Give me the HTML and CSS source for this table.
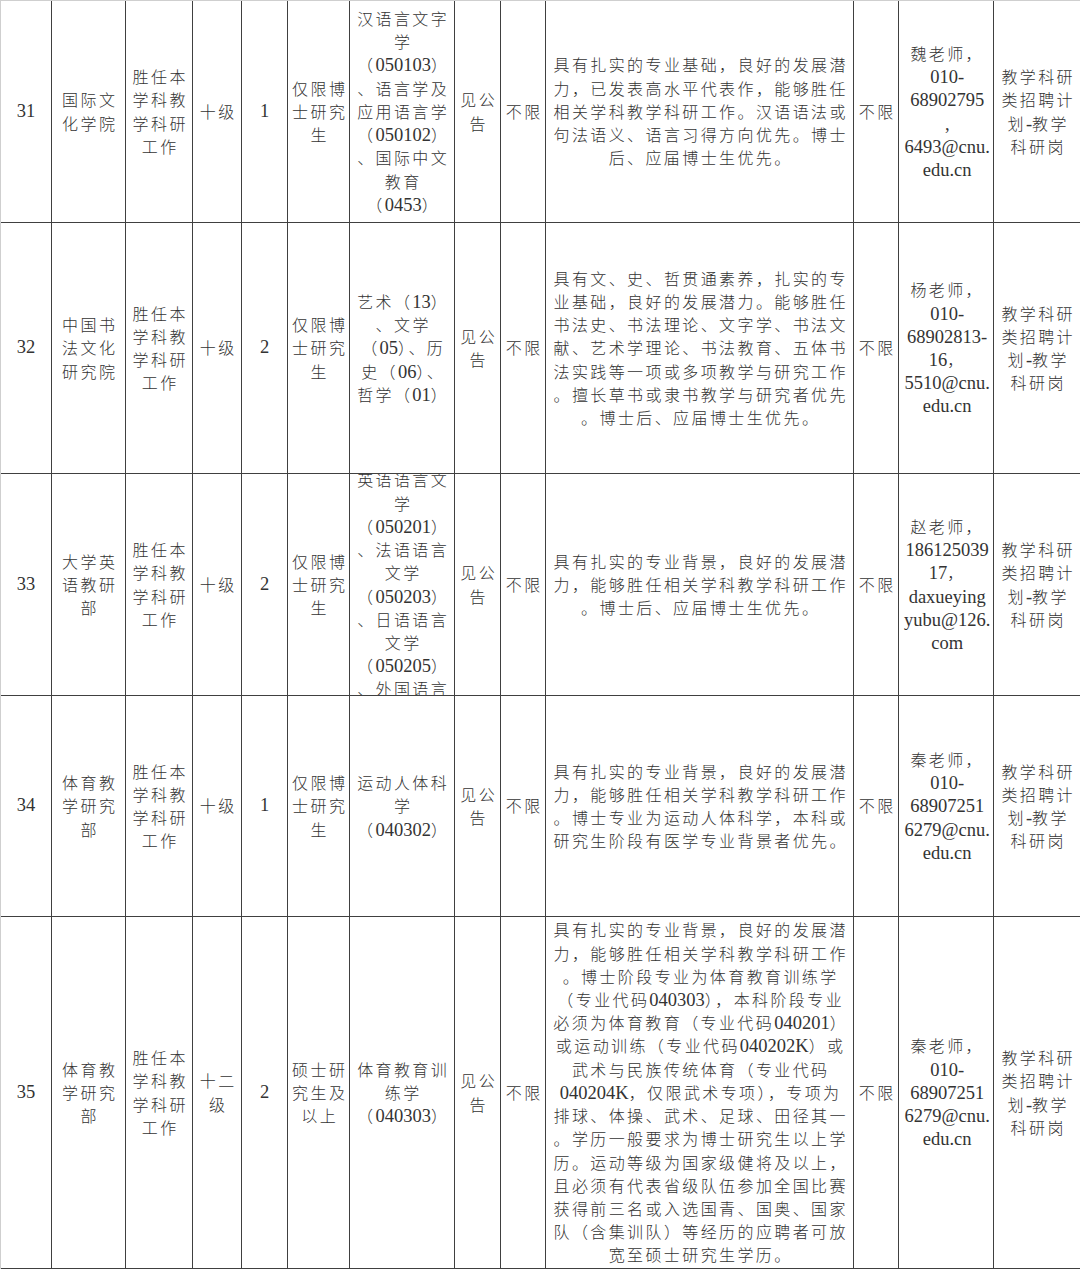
FILE: index.html
```html
<!DOCTYPE html>
<html lang="zh-CN">
<head>
<meta charset="utf-8">
<title>教学科研类招聘计划</title>
<link rel="stylesheet" href="styles.css">
</head>
<body>
<div class="grid">
  <!-- Row 31 -->
  <div class="cell"><div class="t en">31</div></div>
  <div class="cell"><div class="t">国际文<br>化学院</div></div>
  <div class="cell"><div class="t">胜任本<br>学科教<br>学科研<br>工作</div></div>
  <div class="cell"><div class="t">十级</div></div>
  <div class="cell"><div class="t en">1</div></div>
  <div class="cell"><div class="t">仅限博<br>士研究<br>生</div></div>
  <div class="cell"><div class="t">汉语言文字<br>学<br>（<span class="en">050103</span>）<br>、语言学及<br>应用语言学<br>（<span class="en">050102</span>）<br>、国际中文<br>教育<br>（<span class="en">0453</span>）</div></div>
  <div class="cell"><div class="t">见公<br>告</div></div>
  <div class="cell"><div class="t">不限</div></div>
  <div class="cell"><div class="t">具有扎实的专业基础，良好的发展潜<br>力，已发表高水平代表作，能够胜任<br>相关学科教学科研工作。汉语语法或<br>句法语义、语言习得方向优先。博士<br>后、应届博士生优先。</div></div>
  <div class="cell"><div class="t">不限</div></div>
  <div class="cell"><div class="t">魏老师，<br><span class="en">010-<br>68902795<br>,<br>6493@cnu.<br>edu.cn</span></div></div>
  <div class="cell last"><div class="t">教学科研<br>类招聘计<br>划<span class="en">-</span>教学<br>科研岗</div></div>

  <!-- Row 32 -->
  <div class="cell"><div class="t en">32</div></div>
  <div class="cell"><div class="t">中国书<br>法文化<br>研究院</div></div>
  <div class="cell"><div class="t">胜任本<br>学科教<br>学科研<br>工作</div></div>
  <div class="cell"><div class="t">十级</div></div>
  <div class="cell"><div class="t en">2</div></div>
  <div class="cell"><div class="t">仅限博<br>士研究<br>生</div></div>
  <div class="cell"><div class="t">艺术（<span class="en">13</span>）<br>、文学<br>（<span class="en">05</span>）、历<br>史（<span class="en">06</span>）、<br>哲学（<span class="en">01</span>）</div></div>
  <div class="cell"><div class="t">见公<br>告</div></div>
  <div class="cell"><div class="t">不限</div></div>
  <div class="cell"><div class="t">具有文、史、哲贯通素养，扎实的专<br>业基础，良好的发展潜力。能够胜任<br>书法史、书法理论、文字学、书法文<br>献、艺术学理论、书法教育、五体书<br>法实践等一项或多项教学与研究工作<br>。擅长草书或隶书教学与研究者优先<br>。博士后、应届博士生优先。</div></div>
  <div class="cell"><div class="t">不限</div></div>
  <div class="cell"><div class="t">杨老师，<br><span class="en">010-<br>68902813-<br>16</span>，<br><span class="en">5510@cnu.<br>edu.cn</span></div></div>
  <div class="cell last"><div class="t">教学科研<br>类招聘计<br>划<span class="en">-</span>教学<br>科研岗</div></div>

  <!-- Row 33 -->
  <div class="cell"><div class="t en">33</div></div>
  <div class="cell"><div class="t">大学英<br>语教研<br>部</div></div>
  <div class="cell"><div class="t">胜任本<br>学科教<br>学科研<br>工作</div></div>
  <div class="cell"><div class="t">十级</div></div>
  <div class="cell"><div class="t en">2</div></div>
  <div class="cell"><div class="t">仅限博<br>士研究<br>生</div></div>
  <div class="cell"><div class="t">英语语言文<br>学<br>（<span class="en">050201</span>）<br>、法语语言<br>文学<br>（<span class="en">050203</span>）<br>、日语语言<br>文学<br>（<span class="en">050205</span>）<br>、外国语言</div></div>
  <div class="cell"><div class="t">见公<br>告</div></div>
  <div class="cell"><div class="t">不限</div></div>
  <div class="cell"><div class="t">具有扎实的专业背景，良好的发展潜<br>力，能够胜任相关学科教学科研工作<br>。博士后、应届博士生优先。</div></div>
  <div class="cell"><div class="t">不限</div></div>
  <div class="cell"><div class="t">赵老师，<br><span class="en">186125039<br>17</span>，<br><span class="en">daxueying<br>yubu@126.<br>com</span></div></div>
  <div class="cell last"><div class="t">教学科研<br>类招聘计<br>划<span class="en">-</span>教学<br>科研岗</div></div>

  <!-- Row 34 -->
  <div class="cell"><div class="t en">34</div></div>
  <div class="cell"><div class="t">体育教<br>学研究<br>部</div></div>
  <div class="cell"><div class="t">胜任本<br>学科教<br>学科研<br>工作</div></div>
  <div class="cell"><div class="t">十级</div></div>
  <div class="cell"><div class="t en">1</div></div>
  <div class="cell"><div class="t">仅限博<br>士研究<br>生</div></div>
  <div class="cell"><div class="t">运动人体科<br>学<br>（<span class="en">040302</span>）</div></div>
  <div class="cell"><div class="t">见公<br>告</div></div>
  <div class="cell"><div class="t">不限</div></div>
  <div class="cell"><div class="t">具有扎实的专业背景，良好的发展潜<br>力，能够胜任相关学科教学科研工作<br>。博士专业为运动人体科学，本科或<br>研究生阶段有医学专业背景者优先。</div></div>
  <div class="cell"><div class="t">不限</div></div>
  <div class="cell"><div class="t">秦老师，<br><span class="en">010-<br>68907251<br>6279@cnu.<br>edu.cn</span></div></div>
  <div class="cell last"><div class="t">教学科研<br>类招聘计<br>划<span class="en">-</span>教学<br>科研岗</div></div>

  <!-- Row 35 -->
  <div class="cell"><div class="t en">35</div></div>
  <div class="cell"><div class="t">体育教<br>学研究<br>部</div></div>
  <div class="cell"><div class="t">胜任本<br>学科教<br>学科研<br>工作</div></div>
  <div class="cell"><div class="t">十二<br>级</div></div>
  <div class="cell"><div class="t en">2</div></div>
  <div class="cell"><div class="t">硕士研<br>究生及<br>以上</div></div>
  <div class="cell"><div class="t">体育教育训<br>练学<br>（<span class="en">040303</span>）</div></div>
  <div class="cell"><div class="t">见公<br>告</div></div>
  <div class="cell"><div class="t">不限</div></div>
  <div class="cell"><div class="t">具有扎实的专业背景，良好的发展潜<br>力，能够胜任相关学科教学科研工作<br>。博士阶段专业为体育教育训练学<br>（专业代码<span class="en">040303</span>），本科阶段专业<br>必须为体育教育（专业代码<span class="en">040201</span>）<br>或运动训练（专业代码<span class="en">040202K</span>）或<br>武术与民族传统体育（专业代码<br><span class="en">040204K</span>，仅限武术专项），专项为<br>排球、体操、武术、足球、田径其一<br>。学历一般要求为博士研究生以上学<br>历。运动等级为国家级健将及以上，<br>且必须有代表省级队伍参加全国比赛<br>获得前三名或入选国青、国奥、国家<br>队（含集训队）等经历的应聘者可放<br>宽至硕士研究生学历。</div></div>
  <div class="cell"><div class="t">不限</div></div>
  <div class="cell"><div class="t">秦老师，<br><span class="en">010-<br>68907251<br>6279@cnu.<br>edu.cn</span></div></div>
  <div class="cell last"><div class="t">教学科研<br>类招聘计<br>划<span class="en">-</span>教学<br>科研岗</div></div>
</div>
</body>
</html>
```

FILE: styles.css
```css
* {
  box-sizing: border-box;
}

html,
body {
  margin: 0;
  padding: 0;
  background: #ffffff;
}

.grid {
  display: grid;
  width: 1080px;
  grid-template-columns: 51px 74px 67px 49px 46px 62px 105px 46px 45px 308px 45px 95px 86px;
  grid-template-rows: 222px 251px 222px 221px 352px;
  border-top: 1px solid #cfcfcf;
  border-left: 1px solid #cfcfcf;
  font-family: "Noto Sans CJK SC", "Noto Sans CJK JP", sans-serif;
  font-size: 16px;
  font-weight: 300;
  line-height: 23.2px;
  letter-spacing: 2.4px;
  color: #333333;
}

.cell {
  display: flex;
  align-items: center;
  justify-content: center;
  overflow: hidden;
  border-right: 1px solid #404040;
  border-bottom: 1px solid #404040;
}

.cell.last {
  border-right: none;
}

.t {
  white-space: nowrap;
  text-align: center;
  padding-left: 2.4px;
}

.en {
  font-family: "Liberation Serif", "Times New Roman", serif;
  font-size: 18.5px;
  font-weight: 400;
  letter-spacing: 0;
  line-height: 1;
}

.t.en {
  line-height: 23.2px;
  padding-left: 0;
}
```
